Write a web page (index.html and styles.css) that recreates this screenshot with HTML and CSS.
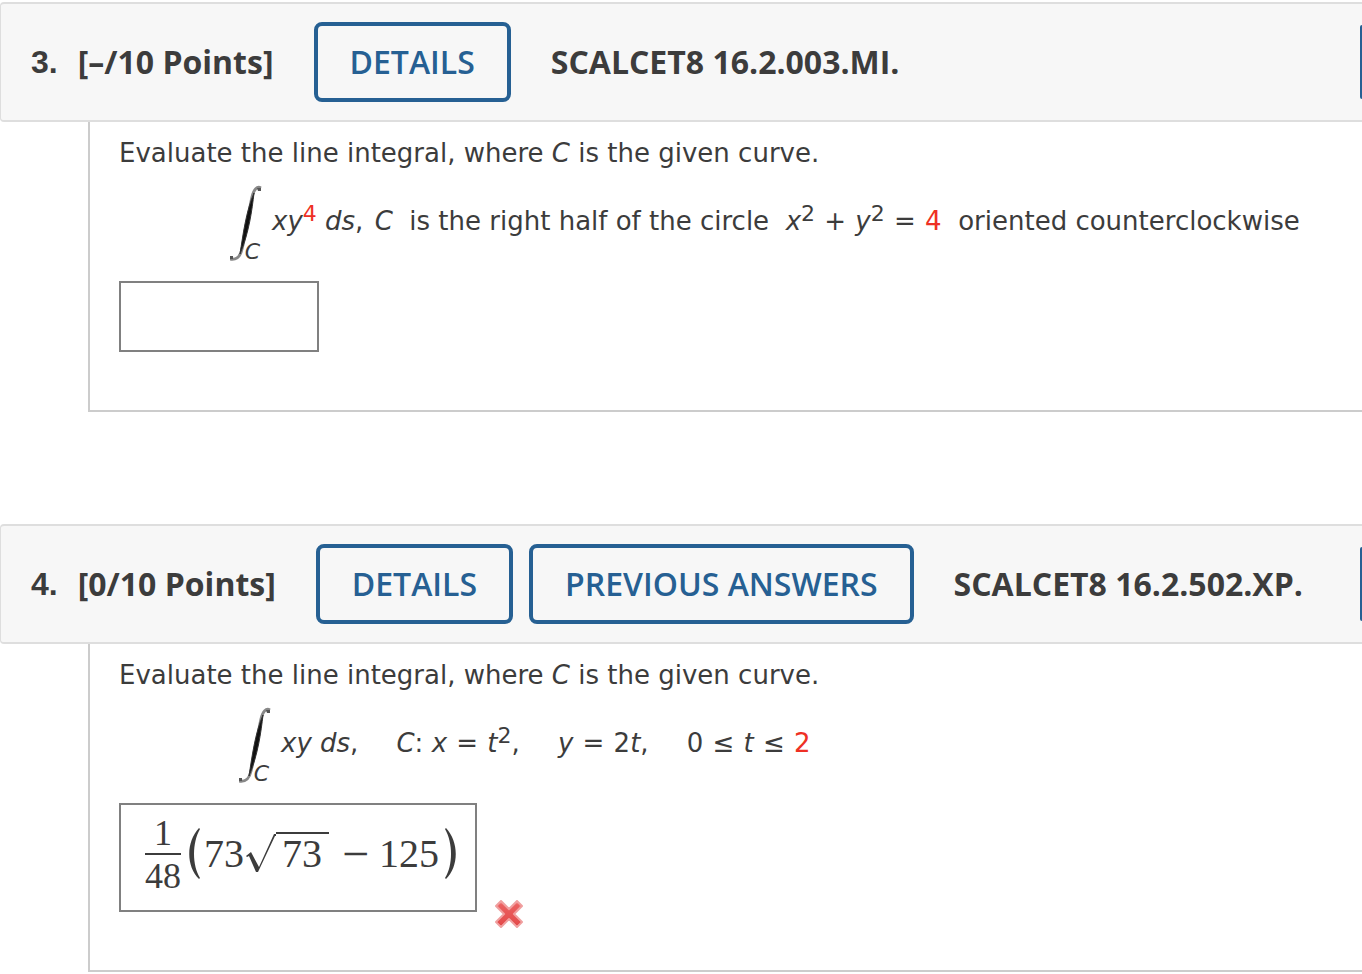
FILE: index.html
```html
<!DOCTYPE html>
<html lang="en">
<head>
<meta charset="utf-8">
<title>Line Integrals</title>
<link rel="stylesheet" href="styles.css">
</head>
<body>
<main class="questions">
  <section class="question">
    <header class="question-header">
      <h2 class="question-title"><span class="number">3.</span><span>[–/10 Points]</span></h2>
      <div class="actions"><button class="action" type="button">DETAILS</button></div>
      <span class="source">SCALCET8 16.2.003.MI.</span>
      <button class="edge-action" type="button" aria-label="More"></button>
    </header>
    <div class="question-body">
      <p class="prompt">Evaluate the line integral, where <i>C</i> is the given curve.</p>
      <div class="formula">
        <span class="integral">
          <svg width="32" height="76" viewBox="0 0 32 76" aria-hidden="true"><path d="M31 3C27 1 24 4 22 12C18 30 16 48 12 64C10 73 6 75 0 74" fill="none" stroke="#888" stroke-width="3"/><path d="M24 8C22 25 19 48 10 69C13 50 16 26 24 8Z" fill="#111" stroke="#333" stroke-width="1"/><path d="M27 3H31V6H28ZM0 71H3V74H0Z" fill="#555"/></svg>
          <i class="limit">C</i>
        </span>
        <span class="expression"><i>xy</i><sup class="value">4</sup> <i>ds</i>, <i class="curve">C</i>&nbsp; is the right half of the circle&nbsp; <i>x</i><sup>2</sup> <span class="op">+</span> <i>y</i><sup>2</sup> <span class="op">=</span> <span class="value">4</span>&nbsp; oriented counterclockwise</span>
      </div>
      <input class="answer" type="text" aria-label="Answer">
    </div>
  </section>

  <section class="question">
    <header class="question-header">
      <h2 class="question-title"><span class="number">4.</span><span>[0/10 Points]</span></h2>
      <div class="actions"><button class="action" type="button">DETAILS</button><button class="action" type="button">PREVIOUS ANSWERS</button></div>
      <span class="source">SCALCET8 16.2.502.XP.</span>
      <button class="edge-action" type="button" aria-label="More"></button>
    </header>
    <div class="question-body">
      <p class="prompt">Evaluate the line integral, where <i>C</i> is the given curve.</p>
      <div class="formula formula-indented">
        <span class="integral">
          <svg width="32" height="76" viewBox="0 0 32 76" aria-hidden="true"><path d="M31 3C27 1 24 4 22 12C18 30 16 48 12 64C10 73 6 75 0 74" fill="none" stroke="#888" stroke-width="3"/><path d="M24 8C22 25 19 48 10 69C13 50 16 26 24 8Z" fill="#111" stroke="#333" stroke-width="1"/><path d="M27 3H31V6H28ZM0 71H3V74H0Z" fill="#555"/></svg>
          <i class="limit">C</i>
        </span>
        <span class="expression"><i>xy</i> <i>ds</i>, &nbsp;&nbsp; <span class="clause"><i>C</i>: <i>x</i> <span class="op">=</span> <i>t</i><sup>2</sup>,</span> &nbsp;&nbsp; <span class="clause"><i>y</i> <span class="op">=</span> 2<i>t</i>,</span> &nbsp;&nbsp; <span class="clause">0 <span class="op">≤</span> <i>t</i> <span class="op">≤</span> <span class="value">2</span></span></span>
      </div>
      <div class="graded">
        <div class="math-answer">
          <span class="fraction"><span>1</span><span class="denominator">48</span></span>
          <svg class="paren" width="12" height="52" viewBox="0 0 12 52" aria-hidden="true"><path d="M11 0C-2 14-2 38 11 51L12 50C4 37 4 15 12 1Z" fill="#3c3c3c"/></svg>
          <span class="term">73</span>
          <svg class="radical" width="32" height="42" viewBox="0 0 32 42" aria-hidden="true"><path d="M2 23L7 19L15 34L30 1H32V3H31L14 39H12L5 23L3 24Z" fill="#3c3c3c"/></svg>
          <span class="radicand">73</span>
          <span class="minus">−</span>
          <span class="term">125</span>
          <svg class="paren" width="12" height="52" viewBox="0 0 12 52" aria-hidden="true"><path d="M1 0C14 14 14 38 1 51L0 50C8 37 8 15 0 1Z" fill="#3c3c3c"/></svg>
        </div>
        <svg class="wrong" width="28" height="28" viewBox="0 0 28 28" role="img" aria-label="Incorrect">
          <defs><linearGradient id="red" x1="0" y1="0" x2="0" y2="1"><stop offset="0" stop-color="#f27c7c"/><stop offset="1" stop-color="#de3c3c"/></linearGradient></defs>
          <path d="M6 1L14 9L22 1L27 6L19 14L27 22L22 27L14 19L6 27L1 22L9 14L1 6Z" fill="url(#red)" stroke="#f0a0a0" stroke-width="2" stroke-linejoin="round"/>
          <path d="M6 6L22 22M22 6L6 22" stroke="#e85353" stroke-width="4" stroke-linecap="round" opacity=".6"/>
        </svg>
      </div>
    </div>
  </section>
</main>
</body>
</html>
```
FILE: styles.css
```css
* { box-sizing: border-box; }
body {
  margin: 0;
  background: #fff;
  color: #3c3c3c;
  font-family: "DejaVu Sans", Verdana, sans-serif;
  font-size: 26px;
}
.questions {
  display: flex;
  flex-direction: column;
  gap: 112px;
  padding-top: 2px;
}
.question-header {
  display: flex;
  align-items: center;
  padding: 18px 0 18px 30px;
  border: 2px solid #dedede;
  border-left-width: 1px;
  border-right: 0;
  border-radius: 4px 0 0 4px;
  background: #f7f7f7;
  font: 700 32px/40px "Open Sans", sans-serif;
  white-space: nowrap;
}
.question-title {
  display: flex;
  align-items: center;
  gap: 20px;
  margin: 0 40px 0 0;
  font: inherit;
}
.number { font-family: "Liberation Sans", Arial, sans-serif; }
.actions {
  display: flex;
  gap: 16px;
  margin-right: 40px;
}
.action {
  height: 80px;
  padding: 0 32px;
  border: 4px solid #266093;
  border-radius: 8px;
  background: transparent;
  color: #266093;
  font: 600 32px/40px "Open Sans", sans-serif;
}
.edge-action {
  flex: none;
  width: 2px;
  height: 74px;
  margin-left: auto;
  padding: 0;
  border: 0;
  border-radius: 2px 0 0 2px;
  background: #266093;
}
.question-body {
  margin-left: 88px;
  padding: 15px 0 58px 29px;
  border-left: 2px solid #ccc;
  border-bottom: 2px solid #ccc;
}
.prompt {
  margin: 0 0 16px;
  line-height: 32px;
}
.formula {
  display: flex;
  align-items: center;
  gap: 10px;
  margin-bottom: 20px;
  padding-left: 111px;
  white-space: nowrap;
}
.formula-indented { padding-left: 120px; }
.integral {
  display: grid;
  flex: none;
}
.integral > * { grid-area: 1 / 1; }
.limit {
  align-self: end;
  justify-self: end;
  padding-right: 2px;
  font-size: 22px;
  line-height: 18px;
}
.expression {
  padding-bottom: 4px;
  line-height: 32px;
}
.curve { margin-left: 3px; }
.op { margin: 0 1px; }
.clause { margin-left: 5px; }
sup {
  font-size: 22px;
  line-height: 0;
  vertical-align: 9px;
}
.value { color: #ee3024; }
.answer {
  display: block;
  width: 200px;
  height: 71px;
  padding: 8px;
  border: 2px solid #808080;
  font: inherit;
}
.graded {
  display: flex;
  align-items: flex-end;
  gap: 18px;
}
.math-answer {
  display: flex;
  align-items: center;
  height: 109px;
  padding: 0 18px 8px 24px;
  border: 2px solid #808080;
  font: 40px/40px "Liberation Serif", serif;
}
.fraction {
  display: flex;
  flex-direction: column;
  align-items: center;
  margin-right: 7px;
  font-size: 36px;
  line-height: 36px;
}
.fraction > span { padding: 2px 0 2px; }
.fraction > .denominator {
  padding: 3px 0 0;
  border-top: 2px solid #3c3c3c;
}
.term { margin-left: 4px; }
.term + .paren { margin-left: 6px; }
.radicand {
  padding: 0 7px 1px 6px;
  border-top: 2px solid #3c3c3c;
}
.minus {
  margin: 0 6px 0 13px;
  font-size: 48px;
}
.minus + .term { margin-left: 4px; }
.wrong { margin-bottom: -16px; }
```
